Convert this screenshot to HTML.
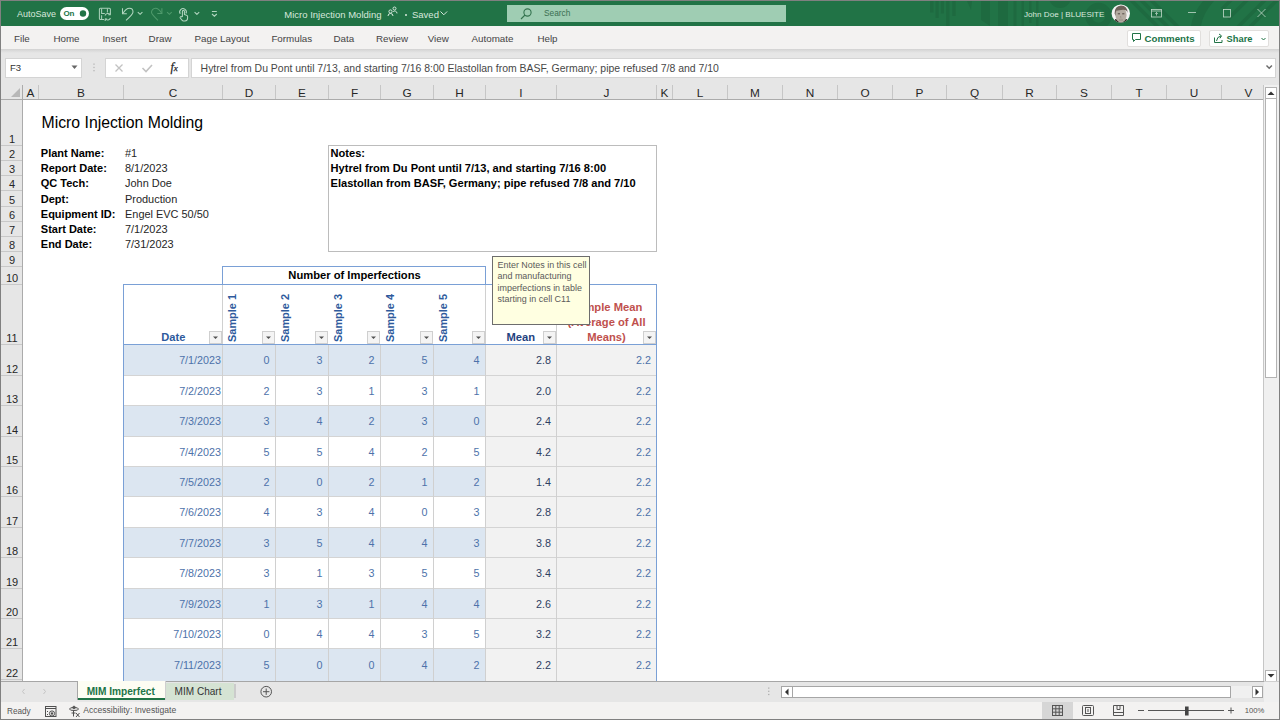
<!DOCTYPE html>
<html><head><meta charset="utf-8"><style>
html,body{margin:0;padding:0;}
body{width:1280px;height:720px;position:relative;overflow:hidden;background:#fff;font-family:"Liberation Sans", sans-serif;}
body div{position:absolute;box-sizing:border-box;}
.t{white-space:nowrap;}
svg{position:absolute;overflow:visible;}
</style></head><body>

<div style="left:0px;top:0px;width:1280px;height:720px;background:#808080"></div>
<div style="left:1px;top:1px;width:1278px;height:25px;background:#217346"></div>
<div style="left:1px;top:26px;width:1278px;height:23px;background:#f3f2f1"></div>
<div style="left:1px;top:49px;width:1278px;height:36px;background:#e6e6e6"></div>
<div style="left:1px;top:49px;width:1278px;height:4px;background:linear-gradient(#d2d2d2,#e6e6e6)"></div>
<div style="left:1px;top:85px;width:1278px;height:15px;background:#e6e6e6"></div>
<div style="left:23px;top:100px;width:1240px;height:581px;background:#fff"></div>
<div style="left:1px;top:100px;width:21px;height:581px;background:#e6e6e6"></div>
<div style="left:1px;top:99px;width:1262px;height:1px;background:#ababab"></div>
<div style="left:22px;top:85px;width:1px;height:596px;background:#ababab"></div>
<div style="left:38px;top:85px;width:1px;height:14px;background:#c6c6c6"></div>
<div class="t" style="left:-169.5px;width:400px;top:86.52px;font-size:11.8px;line-height:13.18px;text-align:center;color:#262626">A</div>
<div style="left:123px;top:85px;width:1px;height:14px;background:#c6c6c6"></div>
<div class="t" style="left:-119.0px;width:400px;top:86.52px;font-size:11.8px;line-height:13.18px;text-align:center;color:#262626">B</div>
<div style="left:222px;top:85px;width:1px;height:14px;background:#c6c6c6"></div>
<div class="t" style="left:-27.0px;width:400px;top:86.52px;font-size:11.8px;line-height:13.18px;text-align:center;color:#262626">C</div>
<div style="left:275px;top:85px;width:1px;height:14px;background:#c6c6c6"></div>
<div class="t" style="left:49.0px;width:400px;top:86.52px;font-size:11.8px;line-height:13.18px;text-align:center;color:#262626">D</div>
<div style="left:328px;top:85px;width:1px;height:14px;background:#c6c6c6"></div>
<div class="t" style="left:102.0px;width:400px;top:86.52px;font-size:11.8px;line-height:13.18px;text-align:center;color:#262626">E</div>
<div style="left:380px;top:85px;width:1px;height:14px;background:#c6c6c6"></div>
<div class="t" style="left:154.5px;width:400px;top:86.52px;font-size:11.8px;line-height:13.18px;text-align:center;color:#262626">F</div>
<div style="left:433px;top:85px;width:1px;height:14px;background:#c6c6c6"></div>
<div class="t" style="left:207.0px;width:400px;top:86.52px;font-size:11.8px;line-height:13.18px;text-align:center;color:#262626">G</div>
<div style="left:485px;top:85px;width:1px;height:14px;background:#c6c6c6"></div>
<div class="t" style="left:259.5px;width:400px;top:86.52px;font-size:11.8px;line-height:13.18px;text-align:center;color:#262626">H</div>
<div style="left:556px;top:85px;width:1px;height:14px;background:#c6c6c6"></div>
<div class="t" style="left:321.0px;width:400px;top:86.52px;font-size:11.8px;line-height:13.18px;text-align:center;color:#262626">I</div>
<div style="left:656px;top:85px;width:1px;height:14px;background:#c6c6c6"></div>
<div class="t" style="left:406.5px;width:400px;top:86.52px;font-size:11.8px;line-height:13.18px;text-align:center;color:#262626">J</div>
<div style="left:672px;top:85px;width:1px;height:14px;background:#c6c6c6"></div>
<div class="t" style="left:464.5px;width:400px;top:86.52px;font-size:11.8px;line-height:13.18px;text-align:center;color:#262626">K</div>
<div style="left:727px;top:85px;width:1px;height:14px;background:#c6c6c6"></div>
<div class="t" style="left:500.0px;width:400px;top:86.52px;font-size:11.8px;line-height:13.18px;text-align:center;color:#262626">L</div>
<div style="left:782px;top:85px;width:1px;height:14px;background:#c6c6c6"></div>
<div class="t" style="left:555.0px;width:400px;top:86.52px;font-size:11.8px;line-height:13.18px;text-align:center;color:#262626">M</div>
<div style="left:837px;top:85px;width:1px;height:14px;background:#c6c6c6"></div>
<div class="t" style="left:610.0px;width:400px;top:86.52px;font-size:11.8px;line-height:13.18px;text-align:center;color:#262626">N</div>
<div style="left:892px;top:85px;width:1px;height:14px;background:#c6c6c6"></div>
<div class="t" style="left:665.0px;width:400px;top:86.52px;font-size:11.8px;line-height:13.18px;text-align:center;color:#262626">O</div>
<div style="left:946px;top:85px;width:1px;height:14px;background:#c6c6c6"></div>
<div class="t" style="left:719.5px;width:400px;top:86.52px;font-size:11.8px;line-height:13.18px;text-align:center;color:#262626">P</div>
<div style="left:1002px;top:85px;width:1px;height:14px;background:#c6c6c6"></div>
<div class="t" style="left:774.5px;width:400px;top:86.52px;font-size:11.8px;line-height:13.18px;text-align:center;color:#262626">Q</div>
<div style="left:1056px;top:85px;width:1px;height:14px;background:#c6c6c6"></div>
<div class="t" style="left:829.5px;width:400px;top:86.52px;font-size:11.8px;line-height:13.18px;text-align:center;color:#262626">R</div>
<div style="left:1111px;top:85px;width:1px;height:14px;background:#c6c6c6"></div>
<div class="t" style="left:884.0px;width:400px;top:86.52px;font-size:11.8px;line-height:13.18px;text-align:center;color:#262626">S</div>
<div style="left:1166px;top:85px;width:1px;height:14px;background:#c6c6c6"></div>
<div class="t" style="left:939.0px;width:400px;top:86.52px;font-size:11.8px;line-height:13.18px;text-align:center;color:#262626">T</div>
<div style="left:1221px;top:85px;width:1px;height:14px;background:#c6c6c6"></div>
<div class="t" style="left:994.0px;width:400px;top:86.52px;font-size:11.8px;line-height:13.18px;text-align:center;color:#262626">U</div>
<div class="t" style="left:1048.5px;width:400px;top:86.52px;font-size:11.8px;line-height:13.18px;text-align:center;color:#262626">V</div>
<svg style="left:0;top:0" width="30" height="100"><polygon points="20,88 20,97 11,97" fill="#b8b8b8"/></svg>
<div style="left:1px;top:145px;width:21px;height:1px;background:#c8c8c8"></div>
<div class="t" style="left:-188px;width:400px;top:132.54px;font-size:11px;line-height:12.29px;text-align:center;color:#262626">1</div>
<div style="left:1px;top:160px;width:21px;height:1px;background:#c8c8c8"></div>
<div class="t" style="left:-188px;width:400px;top:147.54px;font-size:11px;line-height:12.29px;text-align:center;color:#262626">2</div>
<div style="left:1px;top:175px;width:21px;height:1px;background:#c8c8c8"></div>
<div class="t" style="left:-188px;width:400px;top:162.54px;font-size:11px;line-height:12.29px;text-align:center;color:#262626">3</div>
<div style="left:1px;top:190px;width:21px;height:1px;background:#c8c8c8"></div>
<div class="t" style="left:-188px;width:400px;top:177.54px;font-size:11px;line-height:12.29px;text-align:center;color:#262626">4</div>
<div style="left:1px;top:206px;width:21px;height:1px;background:#c8c8c8"></div>
<div class="t" style="left:-188px;width:400px;top:193.54px;font-size:11px;line-height:12.29px;text-align:center;color:#262626">5</div>
<div style="left:1px;top:221px;width:21px;height:1px;background:#c8c8c8"></div>
<div class="t" style="left:-188px;width:400px;top:208.54px;font-size:11px;line-height:12.29px;text-align:center;color:#262626">6</div>
<div style="left:1px;top:236px;width:21px;height:1px;background:#c8c8c8"></div>
<div class="t" style="left:-188px;width:400px;top:223.54px;font-size:11px;line-height:12.29px;text-align:center;color:#262626">7</div>
<div style="left:1px;top:251px;width:21px;height:1px;background:#c8c8c8"></div>
<div class="t" style="left:-188px;width:400px;top:238.54px;font-size:11px;line-height:12.29px;text-align:center;color:#262626">8</div>
<div style="left:1px;top:266px;width:21px;height:1px;background:#c8c8c8"></div>
<div class="t" style="left:-188px;width:400px;top:253.54px;font-size:11px;line-height:12.29px;text-align:center;color:#262626">9</div>
<div style="left:1px;top:284px;width:21px;height:1px;background:#c8c8c8"></div>
<div class="t" style="left:-188px;width:400px;top:271.55px;font-size:11px;line-height:12.29px;text-align:center;color:#262626">10</div>
<div style="left:1px;top:344px;width:21px;height:1px;background:#c8c8c8"></div>
<div class="t" style="left:-188px;width:400px;top:331.55px;font-size:11px;line-height:12.29px;text-align:center;color:#262626">11</div>
<div style="left:1px;top:375px;width:21px;height:1px;background:#c8c8c8"></div>
<div class="t" style="left:-188px;width:400px;top:362.55px;font-size:11px;line-height:12.29px;text-align:center;color:#262626">12</div>
<div style="left:1px;top:405px;width:21px;height:1px;background:#c8c8c8"></div>
<div class="t" style="left:-188px;width:400px;top:392.55px;font-size:11px;line-height:12.29px;text-align:center;color:#262626">13</div>
<div style="left:1px;top:436px;width:21px;height:1px;background:#c8c8c8"></div>
<div class="t" style="left:-188px;width:400px;top:423.55px;font-size:11px;line-height:12.29px;text-align:center;color:#262626">14</div>
<div style="left:1px;top:466px;width:21px;height:1px;background:#c8c8c8"></div>
<div class="t" style="left:-188px;width:400px;top:453.55px;font-size:11px;line-height:12.29px;text-align:center;color:#262626">15</div>
<div style="left:1px;top:496px;width:21px;height:1px;background:#c8c8c8"></div>
<div class="t" style="left:-188px;width:400px;top:483.55px;font-size:11px;line-height:12.29px;text-align:center;color:#262626">16</div>
<div style="left:1px;top:527px;width:21px;height:1px;background:#c8c8c8"></div>
<div class="t" style="left:-188px;width:400px;top:514.54px;font-size:11px;line-height:12.29px;text-align:center;color:#262626">17</div>
<div style="left:1px;top:557px;width:21px;height:1px;background:#c8c8c8"></div>
<div class="t" style="left:-188px;width:400px;top:544.54px;font-size:11px;line-height:12.29px;text-align:center;color:#262626">18</div>
<div style="left:1px;top:588px;width:21px;height:1px;background:#c8c8c8"></div>
<div class="t" style="left:-188px;width:400px;top:575.54px;font-size:11px;line-height:12.29px;text-align:center;color:#262626">19</div>
<div style="left:1px;top:618px;width:21px;height:1px;background:#c8c8c8"></div>
<div class="t" style="left:-188px;width:400px;top:605.54px;font-size:11px;line-height:12.29px;text-align:center;color:#262626">20</div>
<div style="left:1px;top:648px;width:21px;height:1px;background:#c8c8c8"></div>
<div class="t" style="left:-188px;width:400px;top:635.54px;font-size:11px;line-height:12.29px;text-align:center;color:#262626">21</div>
<div style="left:1px;top:679px;width:21px;height:1px;background:#c8c8c8"></div>
<div class="t" style="left:-188px;width:400px;top:666.54px;font-size:11px;line-height:12.29px;text-align:center;color:#262626">22</div>
<div style="left:1263px;top:85px;width:1px;height:596px;background:#c6c6c6"></div>
<div class="t" style="left:41.5px;top:113.90px;font-size:15.8px;line-height:17.65px;color:#000">Micro Injection Molding</div>
<div class="t" style="left:40.8px;top:146.84px;font-size:11px;line-height:12.29px;color:#000;font-weight:bold">Plant Name:</div>
<div class="t" style="left:125px;top:146.89px;font-size:10.95px;line-height:12.23px;color:#262626">#1</div>
<div class="t" style="left:40.8px;top:161.84px;font-size:11px;line-height:12.29px;color:#000;font-weight:bold">Report Date:</div>
<div class="t" style="left:125px;top:161.89px;font-size:10.95px;line-height:12.23px;color:#262626">8/1/2023</div>
<div class="t" style="left:40.8px;top:176.84px;font-size:11px;line-height:12.29px;color:#000;font-weight:bold">QC Tech:</div>
<div class="t" style="left:125px;top:176.89px;font-size:10.95px;line-height:12.23px;color:#262626">John Doe</div>
<div class="t" style="left:40.8px;top:192.84px;font-size:11px;line-height:12.29px;color:#000;font-weight:bold">Dept:</div>
<div class="t" style="left:125px;top:192.89px;font-size:10.95px;line-height:12.23px;color:#262626">Production</div>
<div class="t" style="left:40.8px;top:207.84px;font-size:11px;line-height:12.29px;color:#000;font-weight:bold">Equipment ID:</div>
<div class="t" style="left:125px;top:207.89px;font-size:10.95px;line-height:12.23px;color:#262626">Engel EVC 50/50</div>
<div class="t" style="left:40.8px;top:222.84px;font-size:11px;line-height:12.29px;color:#000;font-weight:bold">Start Date:</div>
<div class="t" style="left:125px;top:222.89px;font-size:10.95px;line-height:12.23px;color:#262626">7/1/2023</div>
<div class="t" style="left:40.8px;top:237.84px;font-size:11px;line-height:12.29px;color:#000;font-weight:bold">End Date:</div>
<div class="t" style="left:125px;top:237.89px;font-size:10.95px;line-height:12.23px;color:#262626">7/31/2023</div>
<div style="left:328px;top:145px;width:329px;height:107px;border:1px solid #bcbcbc;background:#fff"></div>
<div class="t" style="left:330.5px;top:146.95px;font-size:11.1px;line-height:12.40px;color:#000;font-weight:bold">Notes:</div>
<div class="t" style="left:330.5px;top:161.95px;font-size:11.1px;line-height:12.40px;color:#000;font-weight:bold">Hytrel from Du Pont until 7/13, and starting 7/16 8:00</div>
<div class="t" style="left:330.5px;top:177.15px;font-size:11.1px;line-height:12.40px;color:#000;font-weight:bold">Elastollan from BASF, Germany; pipe refused 7/8 and 7/10</div>
<div style="left:222px;top:266px;width:264px;height:19px;border:1px solid #7aa0d6;border-bottom:none"></div>
<div class="t" style="left:154.5px;width:400px;top:269.36px;font-size:11.2px;line-height:12.51px;text-align:center;color:#000;font-weight:bold">Number of Imperfections</div>
<div style="left:124px;top:285px;width:532px;height:59px;background:#fff"></div>
<div style="left:124px;top:345px;width:362px;height:30px;background:#dce6f1"></div>
<div style="left:486px;top:345px;width:170px;height:30px;background:#f2f2f2"></div>
<div style="left:124px;top:375px;width:532px;height:1px;background:#d4d4d4"></div>
<div class="t" style="right:1059px;top:354.47px;font-size:10.75px;line-height:12.01px;text-align:right;color:#4d72aa">7/1/2023</div>
<div class="t" style="right:1010.5px;top:354.47px;font-size:10.75px;line-height:12.01px;text-align:right;color:#4d72aa">0</div>
<div class="t" style="right:957.5px;top:354.47px;font-size:10.75px;line-height:12.01px;text-align:right;color:#4d72aa">3</div>
<div class="t" style="right:905.5px;top:354.47px;font-size:10.75px;line-height:12.01px;text-align:right;color:#4d72aa">2</div>
<div class="t" style="right:852.5px;top:354.47px;font-size:10.75px;line-height:12.01px;text-align:right;color:#4d72aa">5</div>
<div class="t" style="right:800.5px;top:354.47px;font-size:10.75px;line-height:12.01px;text-align:right;color:#4d72aa">4</div>
<div class="t" style="right:729px;top:354.47px;font-size:10.75px;line-height:12.01px;text-align:right;color:#2e3f63">2.8</div>
<div class="t" style="right:629px;top:354.47px;font-size:10.75px;line-height:12.01px;text-align:right;color:#4d72aa">2.2</div>
<div style="left:124px;top:376px;width:362px;height:29px;background:#fff"></div>
<div style="left:486px;top:376px;width:170px;height:29px;background:#f2f2f2"></div>
<div style="left:124px;top:405px;width:532px;height:1px;background:#d4d4d4"></div>
<div class="t" style="right:1059px;top:384.97px;font-size:10.75px;line-height:12.01px;text-align:right;color:#4d72aa">7/2/2023</div>
<div class="t" style="right:1010.5px;top:384.97px;font-size:10.75px;line-height:12.01px;text-align:right;color:#4d72aa">2</div>
<div class="t" style="right:957.5px;top:384.97px;font-size:10.75px;line-height:12.01px;text-align:right;color:#4d72aa">3</div>
<div class="t" style="right:905.5px;top:384.97px;font-size:10.75px;line-height:12.01px;text-align:right;color:#4d72aa">1</div>
<div class="t" style="right:852.5px;top:384.97px;font-size:10.75px;line-height:12.01px;text-align:right;color:#4d72aa">3</div>
<div class="t" style="right:800.5px;top:384.97px;font-size:10.75px;line-height:12.01px;text-align:right;color:#4d72aa">1</div>
<div class="t" style="right:729px;top:384.97px;font-size:10.75px;line-height:12.01px;text-align:right;color:#2e3f63">2.0</div>
<div class="t" style="right:629px;top:384.97px;font-size:10.75px;line-height:12.01px;text-align:right;color:#4d72aa">2.2</div>
<div style="left:124px;top:406px;width:362px;height:30px;background:#dce6f1"></div>
<div style="left:486px;top:406px;width:170px;height:30px;background:#f2f2f2"></div>
<div style="left:124px;top:436px;width:532px;height:1px;background:#d4d4d4"></div>
<div class="t" style="right:1059px;top:415.47px;font-size:10.75px;line-height:12.01px;text-align:right;color:#4d72aa">7/3/2023</div>
<div class="t" style="right:1010.5px;top:415.47px;font-size:10.75px;line-height:12.01px;text-align:right;color:#4d72aa">3</div>
<div class="t" style="right:957.5px;top:415.47px;font-size:10.75px;line-height:12.01px;text-align:right;color:#4d72aa">4</div>
<div class="t" style="right:905.5px;top:415.47px;font-size:10.75px;line-height:12.01px;text-align:right;color:#4d72aa">2</div>
<div class="t" style="right:852.5px;top:415.47px;font-size:10.75px;line-height:12.01px;text-align:right;color:#4d72aa">3</div>
<div class="t" style="right:800.5px;top:415.47px;font-size:10.75px;line-height:12.01px;text-align:right;color:#4d72aa">0</div>
<div class="t" style="right:729px;top:415.47px;font-size:10.75px;line-height:12.01px;text-align:right;color:#2e3f63">2.4</div>
<div class="t" style="right:629px;top:415.47px;font-size:10.75px;line-height:12.01px;text-align:right;color:#4d72aa">2.2</div>
<div style="left:124px;top:437px;width:362px;height:29px;background:#fff"></div>
<div style="left:486px;top:437px;width:170px;height:29px;background:#f2f2f2"></div>
<div style="left:124px;top:466px;width:532px;height:1px;background:#d4d4d4"></div>
<div class="t" style="right:1059px;top:445.97px;font-size:10.75px;line-height:12.01px;text-align:right;color:#4d72aa">7/4/2023</div>
<div class="t" style="right:1010.5px;top:445.97px;font-size:10.75px;line-height:12.01px;text-align:right;color:#4d72aa">5</div>
<div class="t" style="right:957.5px;top:445.97px;font-size:10.75px;line-height:12.01px;text-align:right;color:#4d72aa">5</div>
<div class="t" style="right:905.5px;top:445.97px;font-size:10.75px;line-height:12.01px;text-align:right;color:#4d72aa">4</div>
<div class="t" style="right:852.5px;top:445.97px;font-size:10.75px;line-height:12.01px;text-align:right;color:#4d72aa">2</div>
<div class="t" style="right:800.5px;top:445.97px;font-size:10.75px;line-height:12.01px;text-align:right;color:#4d72aa">5</div>
<div class="t" style="right:729px;top:445.97px;font-size:10.75px;line-height:12.01px;text-align:right;color:#2e3f63">4.2</div>
<div class="t" style="right:629px;top:445.97px;font-size:10.75px;line-height:12.01px;text-align:right;color:#4d72aa">2.2</div>
<div style="left:124px;top:467px;width:362px;height:29px;background:#dce6f1"></div>
<div style="left:486px;top:467px;width:170px;height:29px;background:#f2f2f2"></div>
<div style="left:124px;top:496px;width:532px;height:1px;background:#d4d4d4"></div>
<div class="t" style="right:1059px;top:475.97px;font-size:10.75px;line-height:12.01px;text-align:right;color:#4d72aa">7/5/2023</div>
<div class="t" style="right:1010.5px;top:475.97px;font-size:10.75px;line-height:12.01px;text-align:right;color:#4d72aa">2</div>
<div class="t" style="right:957.5px;top:475.97px;font-size:10.75px;line-height:12.01px;text-align:right;color:#4d72aa">0</div>
<div class="t" style="right:905.5px;top:475.97px;font-size:10.75px;line-height:12.01px;text-align:right;color:#4d72aa">2</div>
<div class="t" style="right:852.5px;top:475.97px;font-size:10.75px;line-height:12.01px;text-align:right;color:#4d72aa">1</div>
<div class="t" style="right:800.5px;top:475.97px;font-size:10.75px;line-height:12.01px;text-align:right;color:#4d72aa">2</div>
<div class="t" style="right:729px;top:475.97px;font-size:10.75px;line-height:12.01px;text-align:right;color:#2e3f63">1.4</div>
<div class="t" style="right:629px;top:475.97px;font-size:10.75px;line-height:12.01px;text-align:right;color:#4d72aa">2.2</div>
<div style="left:124px;top:497px;width:362px;height:30px;background:#fff"></div>
<div style="left:486px;top:497px;width:170px;height:30px;background:#f2f2f2"></div>
<div style="left:124px;top:527px;width:532px;height:1px;background:#d4d4d4"></div>
<div class="t" style="right:1059px;top:506.47px;font-size:10.75px;line-height:12.01px;text-align:right;color:#4d72aa">7/6/2023</div>
<div class="t" style="right:1010.5px;top:506.47px;font-size:10.75px;line-height:12.01px;text-align:right;color:#4d72aa">4</div>
<div class="t" style="right:957.5px;top:506.47px;font-size:10.75px;line-height:12.01px;text-align:right;color:#4d72aa">3</div>
<div class="t" style="right:905.5px;top:506.47px;font-size:10.75px;line-height:12.01px;text-align:right;color:#4d72aa">4</div>
<div class="t" style="right:852.5px;top:506.47px;font-size:10.75px;line-height:12.01px;text-align:right;color:#4d72aa">0</div>
<div class="t" style="right:800.5px;top:506.47px;font-size:10.75px;line-height:12.01px;text-align:right;color:#4d72aa">3</div>
<div class="t" style="right:729px;top:506.47px;font-size:10.75px;line-height:12.01px;text-align:right;color:#2e3f63">2.8</div>
<div class="t" style="right:629px;top:506.47px;font-size:10.75px;line-height:12.01px;text-align:right;color:#4d72aa">2.2</div>
<div style="left:124px;top:528px;width:362px;height:29px;background:#dce6f1"></div>
<div style="left:486px;top:528px;width:170px;height:29px;background:#f2f2f2"></div>
<div style="left:124px;top:557px;width:532px;height:1px;background:#d4d4d4"></div>
<div class="t" style="right:1059px;top:536.97px;font-size:10.75px;line-height:12.01px;text-align:right;color:#4d72aa">7/7/2023</div>
<div class="t" style="right:1010.5px;top:536.97px;font-size:10.75px;line-height:12.01px;text-align:right;color:#4d72aa">3</div>
<div class="t" style="right:957.5px;top:536.97px;font-size:10.75px;line-height:12.01px;text-align:right;color:#4d72aa">5</div>
<div class="t" style="right:905.5px;top:536.97px;font-size:10.75px;line-height:12.01px;text-align:right;color:#4d72aa">4</div>
<div class="t" style="right:852.5px;top:536.97px;font-size:10.75px;line-height:12.01px;text-align:right;color:#4d72aa">4</div>
<div class="t" style="right:800.5px;top:536.97px;font-size:10.75px;line-height:12.01px;text-align:right;color:#4d72aa">3</div>
<div class="t" style="right:729px;top:536.97px;font-size:10.75px;line-height:12.01px;text-align:right;color:#2e3f63">3.8</div>
<div class="t" style="right:629px;top:536.97px;font-size:10.75px;line-height:12.01px;text-align:right;color:#4d72aa">2.2</div>
<div style="left:124px;top:558px;width:362px;height:30px;background:#fff"></div>
<div style="left:486px;top:558px;width:170px;height:30px;background:#f2f2f2"></div>
<div style="left:124px;top:588px;width:532px;height:1px;background:#d4d4d4"></div>
<div class="t" style="right:1059px;top:567.47px;font-size:10.75px;line-height:12.01px;text-align:right;color:#4d72aa">7/8/2023</div>
<div class="t" style="right:1010.5px;top:567.47px;font-size:10.75px;line-height:12.01px;text-align:right;color:#4d72aa">3</div>
<div class="t" style="right:957.5px;top:567.47px;font-size:10.75px;line-height:12.01px;text-align:right;color:#4d72aa">1</div>
<div class="t" style="right:905.5px;top:567.47px;font-size:10.75px;line-height:12.01px;text-align:right;color:#4d72aa">3</div>
<div class="t" style="right:852.5px;top:567.47px;font-size:10.75px;line-height:12.01px;text-align:right;color:#4d72aa">5</div>
<div class="t" style="right:800.5px;top:567.47px;font-size:10.75px;line-height:12.01px;text-align:right;color:#4d72aa">5</div>
<div class="t" style="right:729px;top:567.47px;font-size:10.75px;line-height:12.01px;text-align:right;color:#2e3f63">3.4</div>
<div class="t" style="right:629px;top:567.47px;font-size:10.75px;line-height:12.01px;text-align:right;color:#4d72aa">2.2</div>
<div style="left:124px;top:589px;width:362px;height:29px;background:#dce6f1"></div>
<div style="left:486px;top:589px;width:170px;height:29px;background:#f2f2f2"></div>
<div style="left:124px;top:618px;width:532px;height:1px;background:#d4d4d4"></div>
<div class="t" style="right:1059px;top:597.97px;font-size:10.75px;line-height:12.01px;text-align:right;color:#4d72aa">7/9/2023</div>
<div class="t" style="right:1010.5px;top:597.97px;font-size:10.75px;line-height:12.01px;text-align:right;color:#4d72aa">1</div>
<div class="t" style="right:957.5px;top:597.97px;font-size:10.75px;line-height:12.01px;text-align:right;color:#4d72aa">3</div>
<div class="t" style="right:905.5px;top:597.97px;font-size:10.75px;line-height:12.01px;text-align:right;color:#4d72aa">1</div>
<div class="t" style="right:852.5px;top:597.97px;font-size:10.75px;line-height:12.01px;text-align:right;color:#4d72aa">4</div>
<div class="t" style="right:800.5px;top:597.97px;font-size:10.75px;line-height:12.01px;text-align:right;color:#4d72aa">4</div>
<div class="t" style="right:729px;top:597.97px;font-size:10.75px;line-height:12.01px;text-align:right;color:#2e3f63">2.6</div>
<div class="t" style="right:629px;top:597.97px;font-size:10.75px;line-height:12.01px;text-align:right;color:#4d72aa">2.2</div>
<div style="left:124px;top:619px;width:362px;height:29px;background:#fff"></div>
<div style="left:486px;top:619px;width:170px;height:29px;background:#f2f2f2"></div>
<div style="left:124px;top:648px;width:532px;height:1px;background:#d4d4d4"></div>
<div class="t" style="right:1059px;top:627.97px;font-size:10.75px;line-height:12.01px;text-align:right;color:#4d72aa">7/10/2023</div>
<div class="t" style="right:1010.5px;top:627.97px;font-size:10.75px;line-height:12.01px;text-align:right;color:#4d72aa">0</div>
<div class="t" style="right:957.5px;top:627.97px;font-size:10.75px;line-height:12.01px;text-align:right;color:#4d72aa">4</div>
<div class="t" style="right:905.5px;top:627.97px;font-size:10.75px;line-height:12.01px;text-align:right;color:#4d72aa">4</div>
<div class="t" style="right:852.5px;top:627.97px;font-size:10.75px;line-height:12.01px;text-align:right;color:#4d72aa">3</div>
<div class="t" style="right:800.5px;top:627.97px;font-size:10.75px;line-height:12.01px;text-align:right;color:#4d72aa">5</div>
<div class="t" style="right:729px;top:627.97px;font-size:10.75px;line-height:12.01px;text-align:right;color:#2e3f63">3.2</div>
<div class="t" style="right:629px;top:627.97px;font-size:10.75px;line-height:12.01px;text-align:right;color:#4d72aa">2.2</div>
<div style="left:124px;top:649px;width:362px;height:32px;background:#dce6f1"></div>
<div style="left:486px;top:649px;width:170px;height:32px;background:#f2f2f2"></div>
<div class="t" style="right:1059px;top:659.47px;font-size:10.75px;line-height:12.01px;text-align:right;color:#4d72aa">7/11/2023</div>
<div class="t" style="right:1010.5px;top:659.47px;font-size:10.75px;line-height:12.01px;text-align:right;color:#4d72aa">5</div>
<div class="t" style="right:957.5px;top:659.47px;font-size:10.75px;line-height:12.01px;text-align:right;color:#4d72aa">0</div>
<div class="t" style="right:905.5px;top:659.47px;font-size:10.75px;line-height:12.01px;text-align:right;color:#4d72aa">0</div>
<div class="t" style="right:852.5px;top:659.47px;font-size:10.75px;line-height:12.01px;text-align:right;color:#4d72aa">4</div>
<div class="t" style="right:800.5px;top:659.47px;font-size:10.75px;line-height:12.01px;text-align:right;color:#4d72aa">2</div>
<div class="t" style="right:729px;top:659.47px;font-size:10.75px;line-height:12.01px;text-align:right;color:#2e3f63">2.2</div>
<div class="t" style="right:629px;top:659.47px;font-size:10.75px;line-height:12.01px;text-align:right;color:#4d72aa">2.2</div>
<div style="left:222px;top:345px;width:1px;height:336px;background:#d0d0d0"></div>
<div style="left:275px;top:345px;width:1px;height:336px;background:#d0d0d0"></div>
<div style="left:328px;top:345px;width:1px;height:336px;background:#d0d0d0"></div>
<div style="left:380px;top:345px;width:1px;height:336px;background:#d0d0d0"></div>
<div style="left:433px;top:345px;width:1px;height:336px;background:#d0d0d0"></div>
<div style="left:485px;top:345px;width:1px;height:336px;background:#d0d0d0"></div>
<div style="left:556px;top:345px;width:1px;height:336px;background:#d0d0d0"></div>
<div style="left:222px;top:285px;width:1px;height:59px;background:#d0d0d0"></div>
<div style="left:485px;top:285px;width:1px;height:59px;background:#d0d0d0"></div>
<div style="left:556px;top:285px;width:1px;height:59px;background:#d0d0d0"></div>
<div style="left:123px;top:284px;width:534px;height:1px;background:#7aa0d6"></div>
<div style="left:123px;top:344px;width:534px;height:1px;background:#7aa0d6"></div>
<div style="left:123px;top:284px;width:1px;height:397px;background:#7aa0d6"></div>
<div style="left:656px;top:284px;width:1px;height:397px;background:#7aa0d6"></div>
<div class="t" style="left:-26.69999999999999px;width:400px;top:330.75px;font-size:11.1px;line-height:12.40px;text-align:center;color:#2e5a9c;font-weight:bold">Date</div>
<div class="t" style="left:320.70000000000005px;width:400px;top:330.66px;font-size:11.2px;line-height:12.51px;text-align:center;color:#1f4380;font-weight:bold">Mean</div>
<div class="t" style="left:406.5px;width:400px;top:301.46px;font-size:11.2px;line-height:12.51px;text-align:center;color:#c0504d;font-weight:bold">Sample Mean</div>
<div class="t" style="left:406.5px;width:400px;top:316.26px;font-size:11.2px;line-height:12.51px;text-align:center;color:#c0504d;font-weight:bold">(Average of All</div>
<div class="t" style="left:406.5px;width:400px;top:331.06px;font-size:11.2px;line-height:12.51px;text-align:center;color:#c0504d;font-weight:bold">Means)</div>
<div class="t" style="left:225.6px;top:341.8px;width:60px;height:12px;transform-origin:0 0;transform:rotate(-90deg);font-size:10.95px;line-height:12px;font-weight:bold;color:#2e5a9c">Sample 1</div>
<div class="t" style="left:278.6px;top:341.8px;width:60px;height:12px;transform-origin:0 0;transform:rotate(-90deg);font-size:10.95px;line-height:12px;font-weight:bold;color:#2e5a9c">Sample 2</div>
<div class="t" style="left:331.6px;top:341.8px;width:60px;height:12px;transform-origin:0 0;transform:rotate(-90deg);font-size:10.95px;line-height:12px;font-weight:bold;color:#2e5a9c">Sample 3</div>
<div class="t" style="left:383.6px;top:341.8px;width:60px;height:12px;transform-origin:0 0;transform:rotate(-90deg);font-size:10.95px;line-height:12px;font-weight:bold;color:#2e5a9c">Sample 4</div>
<div class="t" style="left:436.6px;top:341.8px;width:60px;height:12px;transform-origin:0 0;transform:rotate(-90deg);font-size:10.95px;line-height:12px;font-weight:bold;color:#2e5a9c">Sample 5</div>
<div style="left:209px;top:331px;width:13px;height:13px;background:#f4f4f4;border:1px solid #cfcfcf"></div>
<svg style="left:209px;top:331px" width="13" height="13"><polygon points="4,5.5 9,5.5 6.5,8" fill="#505050"/></svg>
<div style="left:262px;top:331px;width:13px;height:13px;background:#f4f4f4;border:1px solid #cfcfcf"></div>
<svg style="left:262px;top:331px" width="13" height="13"><polygon points="4,5.5 9,5.5 6.5,8" fill="#505050"/></svg>
<div style="left:315px;top:331px;width:13px;height:13px;background:#f4f4f4;border:1px solid #cfcfcf"></div>
<svg style="left:315px;top:331px" width="13" height="13"><polygon points="4,5.5 9,5.5 6.5,8" fill="#505050"/></svg>
<div style="left:367px;top:331px;width:13px;height:13px;background:#f4f4f4;border:1px solid #cfcfcf"></div>
<svg style="left:367px;top:331px" width="13" height="13"><polygon points="4,5.5 9,5.5 6.5,8" fill="#505050"/></svg>
<div style="left:420px;top:331px;width:13px;height:13px;background:#f4f4f4;border:1px solid #cfcfcf"></div>
<svg style="left:420px;top:331px" width="13" height="13"><polygon points="4,5.5 9,5.5 6.5,8" fill="#505050"/></svg>
<div style="left:472px;top:331px;width:13px;height:13px;background:#f4f4f4;border:1px solid #cfcfcf"></div>
<svg style="left:472px;top:331px" width="13" height="13"><polygon points="4,5.5 9,5.5 6.5,8" fill="#505050"/></svg>
<div style="left:543px;top:331px;width:13px;height:13px;background:#f4f4f4;border:1px solid #cfcfcf"></div>
<svg style="left:543px;top:331px" width="13" height="13"><polygon points="4,5.5 9,5.5 6.5,8" fill="#505050"/></svg>
<div style="left:643px;top:331px;width:13px;height:13px;background:#f4f4f4;border:1px solid #cfcfcf"></div>
<svg style="left:643px;top:331px" width="13" height="13"><polygon points="4,5.5 9,5.5 6.5,8" fill="#505050"/></svg>
<div style="left:492px;top:256px;width:98px;height:69px;background:#ffffe1;border:1px solid #6d6d6d"></div>
<div class="t" style="left:497.5px;top:259.70px;font-size:8.95px;line-height:10.00px;color:#5a5a5a">Enter Notes in this cell</div>
<div class="t" style="left:497.5px;top:271.20px;font-size:8.95px;line-height:10.00px;color:#5a5a5a">and manufacturing</div>
<div class="t" style="left:497.5px;top:282.70px;font-size:8.95px;line-height:10.00px;color:#5a5a5a">imperfections in table</div>
<div class="t" style="left:497.5px;top:294.20px;font-size:8.95px;line-height:10.00px;color:#5a5a5a">starting in cell C11</div>
<svg style="left:0;top:1px" width="1280" height="25" viewBox="0 0 1280 25">
<defs><clipPath id="tb"><rect x="0" y="0" width="1279" height="25"/></clipPath></defs>
<g clip-path="url(#tb)" fill="#1e6a40">
<rect x="930" y="0" width="3.5" height="11.5"/><rect x="935.5" y="0" width="3.2" height="17"/><rect x="940.8" y="0" width="3.1" height="12.5"/><rect x="946.2" y="0" width="3.3" height="25"/><rect x="952.3" y="0" width="3.3" height="15"/>
<polygon points="967,0 972,0 971,9"/>
<polygon points="981,0 990,0 990,25 981,19"/>
<rect x="998" y="0" width="10" height="25"/>
<rect x="1013.5" y="0" width="3" height="25"/><rect x="1021.5" y="0" width="2.5" height="25"/><rect x="1029" y="0" width="2.5" height="22"/><rect x="1036" y="0" width="2.5" height="25"/>
<circle cx="1060" cy="-4" r="11"/>
<circle cx="1098.5" cy="15" r="10" fill="none" stroke="#1e6a40" stroke-width="6.5"/>
<g stroke="#1e6a40" stroke-width="3.5">
<line x1="1130" y1="-2" x2="1158" y2="26"/><line x1="1140" y1="-2" x2="1168" y2="26"/><line x1="1150" y1="-2" x2="1178" y2="26"/>
<line x1="1222" y1="8" x2="1232" y2="-2"/><line x1="1228" y1="18" x2="1250" y2="-4"/><line x1="1238" y1="26" x2="1268" y2="-4"/><line x1="1250" y1="26" x2="1280" y2="-4"/>
</g>
<path d="M1203,0 h11 Q1203,12 1201,25 h-10 Q1193,12 1203,0 z"/>
</g></svg>
<div class="t" style="left:17px;top:9.05px;font-size:9.0px;line-height:10.05px;color:#d7e8dd">AutoSave</div>
<div style="left:60px;top:7px;width:29px;height:13px;background:#fff;border-radius:7px"></div>
<div class="t" style="left:63.5px;top:9.56px;font-size:8px;line-height:8.94px;color:#217346;font-weight:bold;letter-spacing:-0.3px">On</div>
<svg style="left:0;top:0" width="230" height="26"><circle cx="83" cy="13.5" r="3.2" fill="#217346"/><g fill="none" stroke="#a9d0b8" stroke-width="1.05" stroke-linejoin="round"><path d="M104,19.4 h-3.6 a1,1 0 0 1 -1,-1 v-9.1 a1,1 0 0 1 1,-1 h9 a1,1 0 0 1 1,1 v4.5"/><path d="M101.6,8.6 v4.9 h3.2"/><path d="M107.4,8.6 v3.9"/><path d="M101.6,15.2 v4"/><path d="M105,15.5 a3,3 0 0 1 5.2,-0.8 M110.5,18 a3,3 0 0 1 -5.2,0.8"/><path d="M110.3,12.8 v2 h-2 M105.2,21 v-2 h2"/></g><g fill="none" stroke="#b3d6c0" stroke-width="1.05"><path d="M122.5,8.3 V13.8 H126.8"/><path d="M123,13.3 C125,10 127,8.3 129.5,8.3 C132,8.3 133,10.5 133,12 C133,14 131,16 126,20.4"/><path d="M137.8,12.1 l2.3,2.2 l2.3,-2.2"/></g><g fill="none" stroke="#4f9a6c" stroke-width="1.05"><path d="M161.9,8.3 V13.5 H157.3"/><path d="M161.5,13 C159.5,9.8 157.8,8.3 155.5,8.3 C153,8.3 151.5,10.5 151.5,12.3 C151.5,14.2 153.5,16.2 158,20.3"/><path d="M167.1,12.1 l2.3,2.2 l2.3,-2.2"/></g><g fill="none" stroke="#b3d6c0" stroke-width="1.05" stroke-linejoin="round"><path d="M180.3,13.8 a3.3,3.3 0 1 1 5.6,-0.3"/><path d="M182.4,16.5 v-5.2 a1,1 0 0 1 2,0 v3.3 l2.2,0.6 a1.3,1.3 0 0 1 1,1.3 v1.8 a2.6,2.6 0 0 1 -2.6,2.6 h-1.5 a2,2 0 0 1 -1.5,-0.7 l-1.8,-2.2 a0.9,0.9 0 0 1 1.4,-1.1 z"/><path d="M194.6,12.1 l2.3,2.3 l2.3,-2.3"/></g><g fill="none" stroke="#b3d6c0" stroke-width="1.05"><path d="M211.9,11.5 h4.9"/><path d="M212,14 l2.4,2.2 l2.4,-2.2"/></g></svg>
<div class="t" style="left:284.3px;top:10.00px;font-size:9.5px;line-height:10.61px;color:#d7e8dd">Micro Injection Molding</div>
<svg style="left:0;top:0" width="460" height="26"><g fill="none" stroke="#d7e8dd" stroke-width="1"><circle cx="390.5" cy="11.5" r="1.6"/><path d="M388,16 a2.5,2.5 0 0 1 5,0"/><circle cx="394.5" cy="8.5" r="1.5"/><path d="M393.2,11.6 a2.3,2.3 0 0 1 3.8,1.8"/><path d="M440.5,11.5 l3.3,3.3 l3.3,-3.3"/></g><circle cx="406" cy="15" r="1" fill="#d7e8dd"/></svg>
<div class="t" style="left:412px;top:10.00px;font-size:9.5px;line-height:10.61px;color:#d7e8dd">Saved</div>
<div style="left:507px;top:5px;width:279px;height:17px;background:#9fcdb3"></div>
<svg style="left:518px;top:7px" width="16" height="14"><g fill="none" stroke="#34734f" stroke-width="1.1"><circle cx="9.5" cy="5.5" r="3.6"/><path d="M7,8 L3,12"/></g></svg>
<div class="t" style="left:544px;top:9.49px;font-size:8.3px;line-height:9.27px;color:#3b6f52">Search</div>
<div class="t" style="left:1024px;top:9.97px;font-size:8.1px;line-height:9.05px;color:#d7e8dd">John Doe | BLUESITE</div>
<svg style="left:1111px;top:4px" width="20" height="20"><defs><clipPath id="av"><circle cx="9.8" cy="9.6" r="9"/></clipPath></defs>
<circle cx="9.8" cy="9.6" r="9.2" fill="#f4f4f4"/>
<g clip-path="url(#av)">
<path d="M3,22 L4,15 Q10,17 16,15 L17,22 Z" fill="#2e2622"/>
<ellipse cx="10" cy="11" rx="5.6" ry="7.4" fill="#b4aca2"/>
<path d="M3.6,9.5 Q3.5,2 10,1.6 Q16.5,1.8 16.6,9 Q15.5,5.5 12,5.8 Q8,6.2 5.5,6.8 Q4.5,8 4.6,12 Z" fill="#6e625a"/>
<path d="M6.8,9.8 h2.2 M11.2,9.8 h2.2" stroke="#4a403a" stroke-width="0.9"/>
<path d="M9.5,12 l0.5,2.5" stroke="#8f867d" stroke-width="0.6"/>
<path d="M8,16 h4" stroke="#8a8076" stroke-width="0.7"/>
</g></svg>
<svg style="left:0;top:0" width="1280" height="26"><g fill="none" stroke="#c3d9ca" stroke-width="0.8"><rect x="1151.5" y="9.5" width="10" height="7.5"/><path d="M1151.5,11 h10"/><path d="M1156.5,15.5 v-3 M1155.2,13.8 l1.3,-1.3 l1.3,1.3"/><path d="M1188,12.5 h8"/><rect x="1223.5" y="9.5" width="7" height="7.5"/><path d="M1257.5,9 l8,8 M1265.5,9 l-8,8"/></g></svg>
<div class="t" style="left:14px;top:33.83px;font-size:9.8px;line-height:10.95px;color:#444">File</div>
<div class="t" style="left:53.4px;top:33.83px;font-size:9.8px;line-height:10.95px;color:#444">Home</div>
<div class="t" style="left:102.4px;top:33.83px;font-size:9.8px;line-height:10.95px;color:#444">Insert</div>
<div class="t" style="left:148.6px;top:33.83px;font-size:9.8px;line-height:10.95px;color:#444">Draw</div>
<div class="t" style="left:194.5px;top:33.83px;font-size:9.8px;line-height:10.95px;color:#444">Page Layout</div>
<div class="t" style="left:271.4px;top:33.83px;font-size:9.8px;line-height:10.95px;color:#444">Formulas</div>
<div class="t" style="left:333.5px;top:33.83px;font-size:9.8px;line-height:10.95px;color:#444">Data</div>
<div class="t" style="left:376px;top:33.83px;font-size:9.8px;line-height:10.95px;color:#444">Review</div>
<div class="t" style="left:427.7px;top:33.83px;font-size:9.8px;line-height:10.95px;color:#444">View</div>
<div class="t" style="left:471.5px;top:33.83px;font-size:9.8px;line-height:10.95px;color:#444">Automate</div>
<div class="t" style="left:537.4px;top:33.83px;font-size:9.8px;line-height:10.95px;color:#444">Help</div>
<div style="left:1127px;top:30px;width:74px;height:17px;background:#fff;border:1px solid #e1dfdd;border-radius:2px"></div>
<div style="left:1209px;top:30px;width:60px;height:17px;background:#fff;border:1px solid #e1dfdd;border-radius:2px"></div>
<svg style="left:0;top:0" width="1280" height="50"><g fill="none" stroke="#217346" stroke-width="1"><path d="M1132.5,33.5 h8 v6 h-5 l-2,2 v-2 h-1 z"/><path d="M1214.5,37.5 v5 h7.5 v-2.5"/><path d="M1216.5,41 q0.5,-4.5 4.5,-5"/><path d="M1219,34 l2.5,1.8 l-1.5,2.5"/><path d="M1261.5,38 l2,2 l2,-2"/></g></svg>
<div class="t" style="left:1144.5px;top:33.62px;font-size:9.7px;line-height:10.83px;color:#217346;font-weight:bold">Comments</div>
<div class="t" style="left:1226.6px;top:33.98px;font-size:9.3px;line-height:10.39px;color:#217346;font-weight:bold">Share</div>
<div style="left:5px;top:58px;width:77px;height:20px;background:#fff;border:1px solid #d4d4d4"></div>
<div class="t" style="left:10px;top:62.90px;font-size:9.5px;line-height:10.61px;color:#333">F3</div>
<svg style="left:0;top:0" width="200" height="85"><polygon points="71.5,65.5 77.5,65.5 74.5,69" fill="#666"/><g fill="#a8a8a8"><rect x="93.5" y="63.5" width="1" height="1.3"/><rect x="93.5" y="66.8" width="1" height="1.3"/><rect x="93.5" y="70" width="1" height="1.3"/></g><g fill="none" stroke="#c2c2c2" stroke-width="1.3"><path d="M115.5,64.5 l7,7 M122.5,64.5 l-7,7"/><path d="M142.5,68 l3.5,3.5 l6,-6.5" stroke-width="1.6"/></g></svg>
<div style="left:105px;top:58px;width:84px;height:20px;background:#fff;border:1px solid #d4d4d4"></div>
<svg style="left:0;top:0" width="200" height="85"><g fill="none" stroke="#c2c2c2" stroke-width="1.3"><path d="M115.5,64.5 l7,7 M122.5,64.5 l-7,7"/><path d="M142.5,68 l3.5,3.5 l6,-6.5" stroke-width="1.6"/></g></svg>
<div class="t" style="left:170.5px;top:60px;font-size:12px;line-height:14px;font-style:italic;font-family:'Liberation Serif',serif;color:#222;-webkit-text-stroke:0.25px #222">f<span style="font-size:9px">x</span></div>
<div style="left:191px;top:58px;width:1085px;height:20px;background:#fff;border:1px solid #d4d4d4"></div>
<div class="t" style="left:200.6px;top:62.53px;font-size:10.46px;line-height:11.68px;color:#474747">Hytrel from Du Pont until 7/13, and starting 7/16 8:00 Elastollan from BASF, Germany; pipe refused 7/8 and 7/10</div>
<svg style="left:1262px;top:62px" width="12" height="12"><path d="M4.5,3.5 l2.7,2.8 l2.7,-2.8" fill="none" stroke="#6a6a6a" stroke-width="1.4"/></svg>
<div style="left:1264px;top:85px;width:15px;height:596px;background:#f0f0f0"></div>
<div style="left:1265px;top:87px;width:12px;height:12px;background:#fff;border:1px solid #b3b3b3"></div>
<svg style="left:1265px;top:87px" width="12" height="12"><polygon points="2.5,8 9.5,8 6,4.5" fill="#333"/></svg>
<div style="left:1265px;top:98px;width:12px;height:280px;background:#fff;border:1px solid #b3b3b3"></div>
<div style="left:1265px;top:670px;width:12px;height:12px;background:#fff;border:1px solid #b3b3b3"></div>
<svg style="left:1265px;top:670px" width="12" height="12"><polygon points="2.5,4 9.5,4 6,7.5" fill="#333"/></svg>
<div style="left:1px;top:681px;width:1278px;height:21px;background:#e6e6e6;border-top:1px solid #a6a6a6"></div>
<svg style="left:0;top:681px" width="300" height="21"><g fill="none" stroke="#c4c4c4" stroke-width="1"><path d="M24.5,8 l-2,2.5 l2,2.5"/><path d="M43.5,8 l2,2.5 l-2,2.5"/></g><circle cx="266.2" cy="10.7" r="5.3" fill="none" stroke="#555" stroke-width="1"/><path d="M263,10.7 h6.4 M266.2,7.5 v6.4" stroke="#555" stroke-width="1"/><rect x="234.5" y="3" width="1" height="14" fill="#b0b0b0"/></svg>
<div style="left:77px;top:681px;width:89px;height:19px;background:#fdfdf3;border-left:1px solid #a6a6a6;border-right:1px solid #cfcfcf"></div>
<div style="left:78px;top:698px;width:87px;height:2px;background:#217346"></div>
<div class="t" style="left:86.7px;top:685.61px;font-size:10.15px;line-height:11.34px;color:#217346;font-weight:bold">MIM Imperfect</div>
<div style="left:166px;top:683px;width:68px;height:17px;background:#d5e3d3"></div>
<div class="t" style="left:174.6px;top:685.70px;font-size:10.05px;line-height:11.23px;color:#333">MIM Chart</div>
<svg style="left:760px;top:681px" width="20" height="21"><g fill="#9a9a9a"><rect x="8.3" y="6.5" width="1" height="1.2"/><rect x="8.3" y="9.7" width="1" height="1.2"/><rect x="8.3" y="12.9" width="1" height="1.2"/></g></svg>
<div style="left:781px;top:686px;width:12px;height:12px;background:#fff;border:1px solid #a6a6a6"></div>
<svg style="left:781px;top:686px" width="12" height="12"><polygon points="4,6 7.5,2.5 7.5,9.5" fill="#333"/></svg>
<div style="left:792px;top:686px;width:439px;height:12px;background:#fff;border:1px solid #a6a6a6"></div>
<div style="left:1252px;top:686px;width:11px;height:12px;background:#fff;border:1px solid #a6a6a6"></div>
<svg style="left:1252px;top:686px" width="12" height="12"><polygon points="7,6 3.5,2.5 3.5,9.5" fill="#333"/></svg>
<div style="left:1231px;top:686px;width:21px;height:12px;background:#f0f0f0"></div>
<div style="left:1264px;top:681px;width:15px;height:21px;background:#f0f0f0;border-top:1px solid #d0d0d0"></div>
<div style="left:1px;top:702px;width:1278px;height:17px;background:#f3f2f1"></div>
<div class="t" style="left:7px;top:706.78px;font-size:8.2px;line-height:9.16px;color:#555">Ready</div>
<div class="t" style="left:83.2px;top:706.44px;font-size:8.58px;line-height:9.58px;color:#555">Accessibility: Investigate</div>
<svg style="left:0;top:702px" width="200" height="17"><g fill="none" stroke="#555" stroke-width="1"><rect x="45.5" y="4.5" width="10.5" height="10" stroke="#505050"/><path d="M45.5,6.5 h10.5" stroke="#505050"/><path d="M47.5,9 v1 M47.5,12 v1" stroke="#505050"/><circle cx="52" cy="11.5" r="2.6" stroke="#505050"/><circle cx="52" cy="11.5" r="1.2" fill="#505050" stroke="none"/><ellipse cx="74" cy="7" rx="4.5" ry="1.5" stroke="#505050"/><circle cx="74" cy="5.5" r="1.3" stroke="#505050"/><path d="M73.5,8.5 v6 M71.5,11 l4,0" stroke="#505050"/><path d="M76,11 l3.5,4 M79.5,11 l-3.5,4" stroke="#505050"/></g></svg>
<div style="left:1042px;top:702px;width:31px;height:17px;background:#d6d6d6"></div>
<svg style="left:0;top:702px" width="1280" height="17"><g fill="none" stroke="#555" stroke-width="1"><rect x="1052.5" y="3.5" width="10" height="10"/><path d="M1055.8,3.5 v10 M1059.2,3.5 v10 M1052.5,6.8 h10 M1052.5,10.2 h10"/><rect x="1082.5" y="3.5" width="11" height="10" rx="1"/><rect x="1085.5" y="5.5" width="5" height="6"/><path d="M1088,7 v3"/><path d="M1113.5,3.5 h10 v10 h-10 z M1117,3.5 v4 h3 v-4 M1113.5,10.5 h10"/><path d="M1138,8.5 h6"/><path d="M1148,8.5 h76"/><path d="M1228,8.5 h6 M1231,5.5 v6"/></g><rect x="1185" y="4.5" width="3.6" height="9" fill="#444"/></svg>
<div class="t" style="left:1244.8px;top:707.03px;font-size:7.7px;line-height:8.60px;color:#555">100%</div>
</body></html>
